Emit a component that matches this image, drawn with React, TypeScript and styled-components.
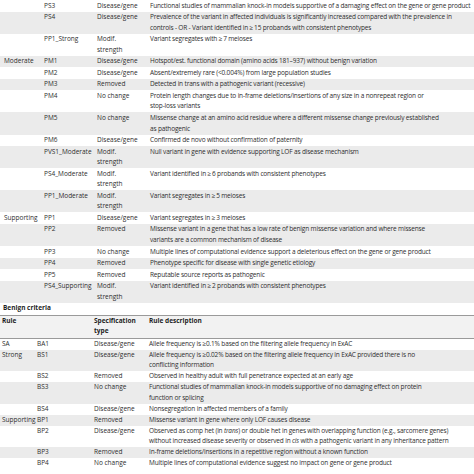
import React from 'react'
import styled, { createGlobalStyle } from 'styled-components'

const GlobalStyle = createGlobalStyle`
  html, body {
    margin: 0;
    padding: 0;
    background: #ffffff;
    overflow: hidden;
  }
  body {
    font-family: 'Open Sans', 'Liberation Sans', sans-serif;
    color: #2e2e2e;
  }
`

type Line = React.ReactNode

type CriteriaRow = {
  cat?: string
  code: string
  spec: string[]
  desc: Line[]
}

const MOD = ['Modif.', 'strength']
const T = '\u2009'

const pathogenic: CriteriaRow[] = [
  { code: 'PS3', spec: ['Disease/gene'], desc: ['Functional studies of mammalian knock-in models supportive of a damaging effect on the gene or gene product'] },
  {
    code: 'PS4',
    spec: ['Disease/gene'],
    desc: [
      'Prevalence of the variant in affected individuals is significantly increased compared with the prevalence in',
      `controls - OR - Variant identified in ≥${T}15 probands with consistent phenotypes`,
    ],
  },
  { code: 'PP1_Strong', spec: MOD, desc: [`Variant segregates with ≥${T}7 meioses`] },
  { cat: 'Moderate', code: 'PM1', spec: ['Disease/gene'], desc: ['Hotspot/est. functional domain (amino acids 181–937) without benign variation'] },
  { code: 'PM2', spec: ['Disease/gene'], desc: ['Absent/extremely rare (<0.004%) from large population studies'] },
  { code: 'PM3', spec: ['Removed'], desc: ['Detected in trans with a pathogenic variant (recessive)'] },
  {
    code: 'PM4',
    spec: ['No change'],
    desc: ['Protein length changes due to in-frame deletions/insertions of any size in a nonrepeat region or', 'stop-loss variants'],
  },
  {
    code: 'PM5',
    spec: ['No change'],
    desc: ['Missense change at an amino acid residue where a different missense change previously established', 'as pathogenic'],
  },
  { code: 'PM6', spec: ['Disease/gene'], desc: ['Confirmed de novo without confirmation of paternity'] },
  { code: 'PVS1_Moderate', spec: MOD, desc: ['Null variant in gene with evidence supporting LOF as disease mechanism'] },
  { code: 'PS4_Moderate', spec: MOD, desc: [`Variant identified in ≥${T}6 probands with consistent phenotypes`] },
  { code: 'PP1_Moderate', spec: MOD, desc: [`Variant segregates in ≥${T}5 meioses`] },
  { cat: 'Supporting', code: 'PP1', spec: ['Disease/gene'], desc: [`Variant segregates in ≥${T}3 meioses`] },
  {
    code: 'PP2',
    spec: ['Removed'],
    desc: ['Missense variant in a gene that has a low rate of benign missense variation and where missense', 'variants are a common mechanism of disease'],
  },
  { code: 'PP3', spec: ['No change'], desc: ['Multiple lines of computational evidence support a deleterious effect on the gene or gene product'] },
  { code: 'PP4', spec: ['Removed'], desc: ['Phenotype specific for disease with single genetic etiology'] },
  { code: 'PP5', spec: ['Removed'], desc: ['Reputable source reports as pathogenic'] },
  { code: 'PS4_Supporting', spec: MOD, desc: [`Variant identified in ≥${T}2 probands with consistent phenotypes`] },
]

const benign: CriteriaRow[] = [
  { cat: 'SA', code: 'BA1', spec: ['Disease/gene'], desc: ['Allele frequency is ≥0.1% based on the filtering allele frequency in ExAC'] },
  {
    cat: 'Strong',
    code: 'BS1',
    spec: ['Disease/gene'],
    desc: ['Allele frequency is ≥0.02% based on the filtering allele frequency in ExAC provided there is no', 'conflicting information'],
  },
  { code: 'BS2', spec: ['Removed'], desc: ['Observed in healthy adult with full penetrance expected at an early age'] },
  {
    code: 'BS3',
    spec: ['No change'],
    desc: ['Functional studies of mammalian knock-in models supportive of no damaging effect on protein', 'function or splicing'],
  },
  { code: 'BS4', spec: ['Disease/gene'], desc: ['Nonsegregation in affected members of a family'] },
  { cat: 'Supporting', code: 'BP1', spec: ['Removed'], desc: ['Missense variant in gene where only LOF causes disease'] },
  {
    code: 'BP2',
    spec: ['Disease/gene'],
    desc: [
      <>
        Observed as comp het (in <em>trans</em>) or double het in genes with overlapping function (e.g., sarcomere genes)
      </>,
      <>
        without increased disease severity or observed in <em>cis</em> with a pathogenic variant in any inheritance pattern
      </>,
    ],
  },
  { code: 'BP3', spec: ['Removed'], desc: ['In-frame deletions/insertions in a repetitive region without a known function'] },
  { code: 'BP4', spec: ['No change'], desc: ['Multiple lines of computational evidence suggest no impact on gene or gene product'] },
]

const PATHO_COLS = '40px 53px 53px 1fr'
const BENIGN_COLS = '35px 57px 55px 1fr'

function CriteriaTable({ rows, cols, indent, lh, pad }: { rows: CriteriaRow[]; cols: string; indent: number; lh: number; pad: number }) {
  return (
    <>
      {rows.map((row, i) => (
        <StyledRow key={row.code} $cols={cols} $indent={indent} $pad={pad} $shaded={i % 2 === 1}>
          <StyledCell $lh={lh}>{row.cat}</StyledCell>
          <StyledCell $lh={lh}>{row.code}</StyledCell>
          <StyledCell $lh={lh}>
            {row.spec.map((s) => (
              <StyledLine key={s}>{s}</StyledLine>
            ))}
          </StyledCell>
          <StyledDescCell $lh={lh}>
            {row.desc.map((d, j) => (
              <StyledLine key={j}>{d}</StyledLine>
            ))}
          </StyledDescCell>
        </StyledRow>
      ))}
    </>
  )
}

function App() {
  return (
    <StyledPage>
      <GlobalStyle />
      <CriteriaTable rows={pathogenic} cols={PATHO_COLS} indent={4} lh={10.55} pad={0.5} />
      <StyledSectionTitle>Benign criteria</StyledSectionTitle>
      <StyledHeaderRow $cols={BENIGN_COLS} $indent={2}>
        <StyledHeadCell $span={2}>Rule</StyledHeadCell>
        <StyledHeadCell>
          <StyledLine>Specification</StyledLine>
          <StyledLine>type</StyledLine>
        </StyledHeadCell>
        <StyledHeadCell>Rule description</StyledHeadCell>
      </StyledHeaderRow>
      <CriteriaTable rows={benign} cols={BENIGN_COLS} indent={2} lh={10.4} pad={0.3} />
    </StyledPage>
  )
}

const StyledPage = styled.div`
  width: 474px;
  font-size: 6.5px;
`
const StyledRow = styled.div<{ $cols: string; $indent: number; $pad: number; $shaded: boolean }>`
  display: grid;
  grid-template-columns: ${(p) => p.$cols};
  align-items: start;
  padding: ${(p) => `${p.$pad}px 0 ${p.$pad}px ${p.$indent}px`};
  background-color: ${(p) => (p.$shaded ? '#ebebeb' : 'transparent')};
`
const StyledCell = styled.div<{ $lh: number }>`
  line-height: ${(p) => p.$lh}px;
  white-space: nowrap;
`
const StyledDescCell = styled(StyledCell)`
  letter-spacing: -0.16px;
`
const StyledLine = styled.span`
  display: block;

  em {
    font-style: italic;
  }
`
const StyledSectionTitle = styled.div`
  padding: 0.6px 0 0.6px 3px;
  line-height: 10.6px;
  font-weight: 700;
  color: #1f1f1f;
`
const StyledHeaderRow = styled.div<{ $cols: string; $indent: number }>`
  display: grid;
  grid-template-columns: ${(p) => p.$cols};
  padding: 0 0 1px ${(p) => p.$indent}px;
  border-top: 1px solid #9a9a9a;
  border-bottom: 1px solid #9a9a9a;
  background-color: #f2f2f2;
  line-height: 10.6px;
`
const StyledHeadCell = styled.div<{ $span?: number }>`
  grid-column: span ${(p) => p.$span ?? 1};
  font-weight: 700;
  color: #1f1f1f;
  white-space: nowrap;
`

export default App
